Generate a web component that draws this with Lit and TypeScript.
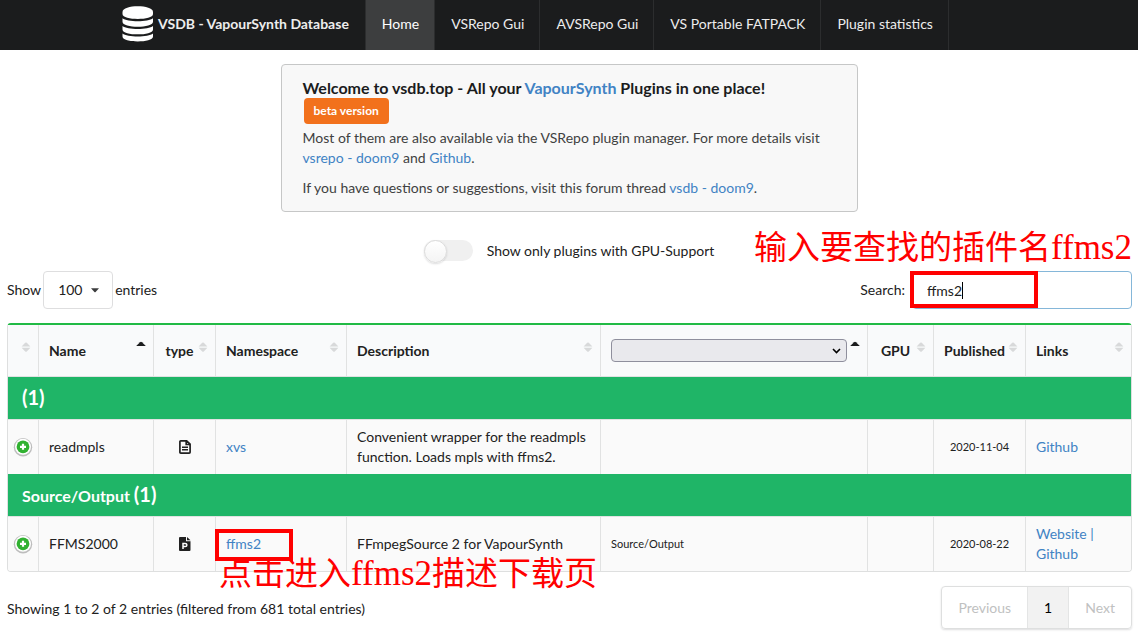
import { LitElement, html, css, svg, nothing } from "lit";
import { customElement, property, state } from "lit/decorators.js";
import { classMap } from "lit/directives/class-map.js";

interface Link {
  label: string;
  href: string;
}

interface Plugin {
  name: string;
  kind: "script" | "plugin";
  namespace: string;
  description: string;
  category: string;
  published: string;
  links: Link[];
  marked?: boolean;
}

const NAV = ["Home", "VSRepo Gui", "AVSRepo Gui", "VS Portable FATPACK", "Plugin statistics"];

const PLUGINS: Plugin[] = [
  {
    name: "readmpls",
    kind: "script",
    namespace: "xvs",
    description: "Convenient wrapper for the readmpls function. Loads mpls with ffms2.",
    category: "",
    published: "2020-11-04",
    links: [{ label: "Github", href: "#github" }],
  },
  {
    name: "FFMS2000",
    kind: "plugin",
    namespace: "ffms2",
    description: "FFmpegSource 2 for VapourSynth",
    category: "Source/Output",
    published: "2020-08-22",
    links: [
      { label: "Website |", href: "#website" },
      { label: "Github", href: "#github" },
    ],
    marked: true,
  },
];

@customElement("sort-mark")
class SortMark extends LitElement {
  @property({ type: Boolean }) active = false;

  static styles = css`
    :host {
      display: block;
      flex: none;
      width: 10px;
      height: 20px;
    }
    svg {
      display: block;
    }
  `;

  render() {
    return html`<svg width="10" height="20" viewBox="0 0 10 20" aria-hidden="true">
      ${this.active
        ? svg`<path d="M0.2 5 L4 1.2 Q5 0.4 6 1.2 L9.8 5 Z" fill="#1b1c1d" />`
        : svg`<path d="M0.6 5.4 L4.2 1.8 Q5 1.2 5.8 1.8 L9.4 5.4 Z M0.6 6.8 H9.4 L5.8 10.4 Q5 11 4.2 10.4 Z" fill="#d8d9da" />`}
    </svg>`;
  }
}

@customElement("app-root")
class AppRoot extends LitElement {
  @state() private query = "ffms2";

  static styles = css`
    :host {
      display: block;
      min-height: 100vh;
      background: #fff;
      color: #212121;
      font: 14px/20px Lato, "Noto Sans CJK SC", sans-serif;
    }
    * {
      box-sizing: border-box;
    }
    a {
      color: #4183c4;
      text-decoration: none;
    }
    input,
    select,
    button {
      font: inherit;
      color: inherit;
      margin: 0;
    }
    .nav {
      background: #1b1c1d;
      color: #e8e8e8;
    }
    .nav-inner {
      display: flex;
      width: 926px;
      max-width: 100%;
      min-height: 50px;
      margin: 0 auto;
    }
    .nav-item {
      display: flex;
      align-items: center;
      padding: 0 15px 2px 16px;
      border-right: 1px solid #2c2d2e;
      color: #ededed;
      white-space: nowrap;
    }
    .nav-item.brand {
      gap: 4px;
      padding-right: 16px;
      font-weight: 700;
    }
    .nav-item.active {
      background: #3d3e3f;
      color: #fff;
    }
    .intro {
      width: 577px;
      max-width: 100%;
      margin: 14px auto 0;
      padding: 13px 21px;
      border: 1px solid #c6c7c7;
      border-radius: 4px;
      background: #f8f8f8;
      color: #404141;
    }
    .intro h1 {
      display: flex;
      flex-wrap: wrap;
      margin: 0 0 4px;
      font-size: 16px;
      line-height: 20px;
      color: #1b1c1d;
    }
    .intro p {
      margin: 0;
    }
    .intro p + p {
      margin-top: 10px;
    }
    .badge {
      margin-left: 1px;
      padding: 3px 10px;
      border-radius: 4px;
      background: #f2711c;
      color: #fff;
      font-size: 12px;
    }
    .toggle {
      display: flex;
      justify-content: center;
      align-items: center;
      gap: 14px;
      margin-top: 28px;
    }
    .toggle input {
      appearance: none;
      display: flex;
      width: 49px;
      height: 21px;
      border-radius: 11px;
      background: #f0f0f0;
    }
    .toggle input::before {
      content: "";
      width: 21px;
      height: 21px;
      border: 1px solid #dcdcdc;
      border-radius: 50%;
      background: linear-gradient(#fff, #f4f4f4);
      box-shadow: 0 1px 2px rgba(34, 36, 38, 0.15);
    }
    .toggle input:checked {
      justify-content: flex-end;
      background: #2185d0;
    }
    .content {
      padding: 0 6px 0 7px;
    }
    .tools,
    .footer {
      display: flex;
      justify-content: space-between;
    }
    .tools {
      align-items: center;
      margin-top: 10px;
    }
    .length,
    .search {
      display: flex;
      align-items: center;
      gap: 2px;
    }
    .search {
      position: relative;
      gap: 7px;
    }
    .pick {
      display: grid;
      align-items: center;
    }
    .pick > * {
      grid-area: 1 / 1;
    }
    .pick svg {
      justify-self: end;
      pointer-events: none;
    }
    .pick select {
      appearance: none;
      width: 100%;
    }
    .pick.rows select {
      width: 70px;
      height: 38px;
      padding: 0 14px;
      border: 1px solid #dededf;
      border-radius: 4px;
      background: #fff;
    }
    .pick.rows svg {
      margin-right: 14px;
    }
    .pick.category {
      flex: 1;
    }
    .pick.category select {
      height: 23px;
      border: 1px solid #8f8f9d;
      border-radius: 4px;
      background: #e9e9ed;
    }
    .pick.category svg {
      margin-right: 6px;
    }
    .search input {
      width: 220px;
      height: 38px;
      padding: 0 14px;
      border: 1px solid #85b7d9;
      border-radius: 4px;
      outline: none;
      background: #fff;
    }
    .frame,
    .note,
    .cursor {
      position: absolute;
      pointer-events: none;
    }
    .frame {
      border: 4px solid #f00;
    }
    .note {
      color: #f00;
      font: 33px/34px "Liberation Serif", "Noto Sans CJK SC", serif;
      white-space: nowrap;
    }
    .note .latin {
      font-size: 35px;
    }
    .search .frame {
      top: 0;
      right: 94px;
      width: 128px;
      height: 37px;
    }
    .search .note {
      right: 0;
      bottom: 44px;
    }
    .search .cursor {
      right: 169px;
      width: 1px;
      height: 17px;
      background: #000;
    }
    table {
      width: 100%;
      margin-top: 14px;
      table-layout: fixed;
      border-collapse: separate;
      border-spacing: 0;
      border: 1px solid #dedfdf;
      border-top: 2px solid #21ba45;
      border-radius: 4px;
    }
    .w-toggle {
      width: 30px;
    }
    .w-name {
      width: 115px;
    }
    .w-type {
      width: 62px;
    }
    .w-namespace {
      width: 131px;
    }
    .w-category {
      width: 267px;
    }
    .w-gpu {
      width: 66px;
    }
    .w-published {
      width: 92px;
    }
    .w-links {
      width: 106px;
    }
    th,
    td {
      padding: 0 10px;
      text-align: left;
      border-left: 1px solid #e1e2e2;
    }
    th:first-child,
    td:first-child,
    .group th {
      border-left: 0;
    }
    thead th {
      height: 52px;
      padding-right: 7px;
      background: #f9fafb;
      border-bottom: 1px solid #e1e2e2;
    }
    .head {
      display: flex;
      align-items: center;
      gap: 3px;
    }
    .head .text {
      flex: 1;
    }
    .centered .text {
      text-align: center;
    }
    .group th {
      height: 42px;
      padding: 0 14px;
      background: #1fb567;
      color: #fff;
      font-size: 16px;
    }
    .group .count {
      font-size: 20px;
    }
    tbody td {
      position: relative;
      height: 55px;
      background: #fafafa;
      border-top: 1px solid #e1e2e2;
    }
    td.center {
      padding: 0;
      text-align: center;
    }
    td.small {
      font-size: 11px;
    }
    tbody tr:last-child td:first-child {
      border-bottom-left-radius: 3px;
    }
    tbody tr:last-child td:last-child {
      border-bottom-right-radius: 3px;
    }
    .expand {
      display: block;
      margin: 0 auto;
      padding: 0;
      border: 0;
      background: none;
    }
    td svg {
      display: block;
      margin: 0 auto;
    }
    td .frame {
      top: 12px;
      left: -1px;
      width: 78px;
      height: 32px;
    }
    td .note {
      top: 40px;
      left: 3px;
      z-index: 1;
    }
    .footer {
      align-items: flex-start;
      margin-top: 14px;
    }
    .info {
      padding-top: 13px;
    }
    .pages {
      display: flex;
      border: 1px solid #dedfdf;
      border-radius: 4px;
      box-shadow: 0 1px 2px rgba(34, 36, 38, 0.15);
    }
    .pages button {
      height: 41px;
      padding: 0 16px;
      border: 0;
      border-left: 1px solid #e4e5e5;
      background: none;
    }
    .pages button:first-child {
      border-left: 0;
    }
    .pages button:disabled {
      color: #c0c1c1;
    }
    .pages .current {
      background: #f2f2f2;
      color: #000;
    }
  `;

  private head(label: string, centered = false, active = false) {
    return html`<th scope="col">
      <div class=${classMap({ head: true, centered })}>
        <span class="text">${label}</span><sort-mark ?active=${active}></sort-mark>
      </div>
    </th>`;
  }

  private fileIcon(kind: Plugin["kind"]) {
    return kind === "script"
      ? html`<svg width="12" height="14" viewBox="0 0 12 14" role="img" aria-label="Script">
          <path d="M1.8 0.9 H7.6 L11.1 4.2 V12.2 Q11.1 13.1 10.2 13.1 H1.8 Q0.9 13.1 0.9 12.2 V1.8 Q0.9 0.9 1.8 0.9 Z M7.2 1 V4.5 H11" fill="none" stroke="#212121" stroke-width="1.7" />
          <path d="M3 7.2 H9 M3 9.8 H9" stroke="#212121" stroke-width="1.4" />
        </svg>`
      : html`<svg width="12" height="14" viewBox="0 0 12 14" role="img" aria-label="Plugin">
          <path d="M1 0 H7 V4.2 H11.5 V13 Q11.5 14 10.5 14 H1 Q0 14 0 13 V1 Q0 0 1 0 Z M8 0 L11.5 3.3 H8 Z" fill="#212121" />
          <path d="M4 12 V6.4 H6.1 Q7.9 6.4 7.9 8 Q7.9 9.6 6.1 9.6 H4" fill="none" stroke="#fff" stroke-width="1.5" />
        </svg>`;
  }

  private group(category: string, count: number) {
    return html`<tr class="group">
      <th colspan="9" scope="colgroup">${category} <span class="count">(${count})</span></th>
    </tr>`;
  }

  private row(p: Plugin) {
    return html`<tr>
      <td class="center">
        <button class="expand" aria-label="Show details of ${p.name}">
          <svg width="20" height="20" viewBox="0 0 20 20">
            <circle cx="10" cy="10.2" r="9.2" fill="#bdbdbd" />
            <circle cx="10" cy="9.8" r="8" fill="#fff" />
            <circle cx="10" cy="9.8" r="6.4" fill="#31b131" />
            <path d="M10 6.8 V12.8 M7 9.8 H13" stroke="#fff" stroke-width="2.2" />
          </svg>
        </button>
      </td>
      <td>${p.name}</td>
      <td class="center">${this.fileIcon(p.kind)}</td>
      <td>
        <a href="#${p.namespace}">${p.namespace}</a>
        ${p.marked
          ? html`<span class="frame"></span>
              <span class="note">点击进入<span class="latin">ffms2</span>描述下载页</span>`
          : nothing}
      </td>
      <td>${p.description}</td>
      <td class="small">${p.category}</td>
      <td></td>
      <td class="center small">${p.published}</td>
      <td>${p.links.map((l) => html`<a href=${l.href}>${l.label}</a> `)}</td>
    </tr>`;
  }

  render() {
    return html`
      <nav class="nav">
        <div class="nav-inner">
          <a class="nav-item brand" href="#top">
            <svg width="32" height="36" viewBox="0 0 32 36" aria-hidden="true">
              <g fill="#fff">
                <path d="M0.5 6 C0.5 -1.6 31 -1.6 31 6 V8 C31 14.6 0.5 14.6 0.5 8 Z" />
                <path d="M0.5 12.2 C5 16.2 26.5 16.2 31 12.2 V15.8 C31 22.4 0.5 22.4 0.5 15.8 Z" />
                <path d="M0.5 20 C5 24 26.5 24 31 20 V23.4 C31 30 0.5 30 0.5 23.4 Z" />
                <path d="M0.5 27.6 C5 31.6 26.5 31.6 31 27.6 V30.6 C31 37.2 0.5 37.2 0.5 30.6 Z" />
              </g>
            </svg>
            VSDB - VapourSynth Database
          </a>
          ${NAV.map((label, i) => html`<a class=${classMap({ "nav-item": true, active: i === 0 })} href="#nav-${i}">${label}</a>`)}
        </div>
      </nav>

      <section class="intro">
        <h1>
          <span>Welcome to vsdb.top - All your <a href="#vapoursynth">VapourSynth</a> Plugins in one place!</span>
          <span class="badge">beta version</span>
        </h1>
        <p>
          Most of them are also available via the VSRepo plugin manager. For more details visit
          <a href="#vsrepo">vsrepo - doom9</a> and <a href="#github">Github</a>.
        </p>
        <p>If you have questions or suggestions, visit this forum thread <a href="#vsdb">vsdb - doom9</a>.</p>
      </section>

      <div class="toggle">
        <input id="gpu" type="checkbox" role="switch" />
        <label for="gpu">Show only plugins with GPU-Support</label>
      </div>

      <main class="content">
        <div class="tools">
          <div class="length">
            <label for="rows">Show</label>
            <div class="pick rows">
              <select id="rows">
                <option>100</option>
              </select>
              <svg width="8" height="5" viewBox="0 0 8 5"><path d="M0 0.2 H8 L4.6 4.1 Q4 4.6 3.4 4.1 Z" fill="#3c3d3e" /></svg>
            </div>
            <span>entries</span>
          </div>
          <div class="search">
            <label for="query">Search:</label>
            <input
              id="query"
              type="text"
              .value=${this.query}
              @input=${(e: Event) => (this.query = (e.target as HTMLInputElement).value)}
            />
            <span class="cursor"></span>
            <span class="frame"></span>
            <span class="note">输入要查找的插件名<span class="latin">ffms2</span></span>
          </div>
        </div>

        <table>
          <colgroup>
            <col class="w-toggle" />
            <col class="w-name" />
            <col class="w-type" />
            <col class="w-namespace" />
            <col />
            <col class="w-category" />
            <col class="w-gpu" />
            <col class="w-published" />
            <col class="w-links" />
          </colgroup>
          <thead>
            <tr>
              ${this.head("")} ${this.head("Name", false, true)} ${this.head("type", true)}
              ${this.head("Namespace")} ${this.head("Description")}
              <th scope="col">
                <div class="head">
                  <div class="pick category">
                    <select aria-label="Category">
                      <option></option>
                      <option>Source/Output</option>
                    </select>
                    <svg width="9" height="6" viewBox="0 0 9 6"><path d="M1 1 L4.5 4.5 L8 1" fill="none" stroke="#000" stroke-width="1.6" /></svg>
                  </div>
                  <sort-mark active></sort-mark>
                </div>
              </th>
              ${this.head("GPU", true)} ${this.head("Published", true)} ${this.head("Links")}
            </tr>
          </thead>
          <tbody>
            ${PLUGINS.map((p) => [this.group(p.category, 1), this.row(p)])}
          </tbody>
        </table>

        <div class="footer">
          <div class="info">Showing 1 to 2 of 2 entries (filtered from 681 total entries)</div>
          <div class="pages">
            <button disabled>Previous</button>
            <button class="current" aria-current="page">1</button>
            <button disabled>Next</button>
          </div>
        </div>
      </main>
    `;
  }
}
